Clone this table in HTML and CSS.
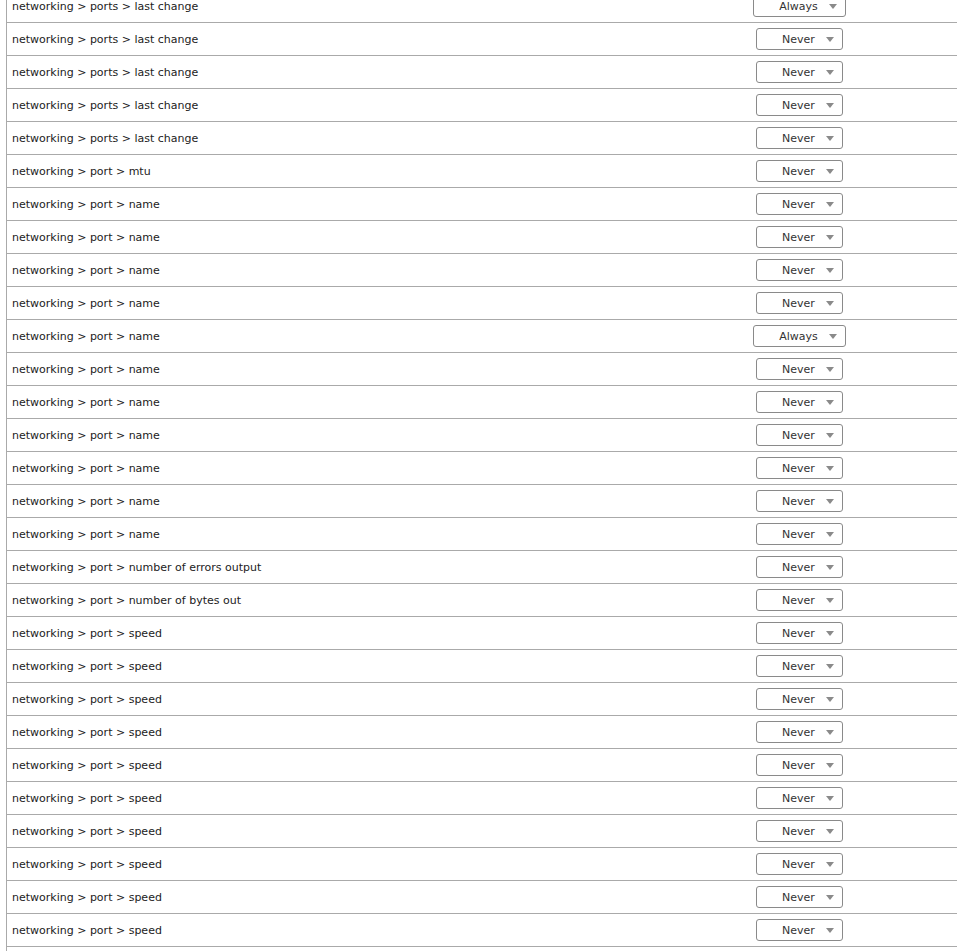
FILE: index.html
```html
<!DOCTYPE html>
<html>
<head>
<meta charset="utf-8">
<link rel="stylesheet" href="styles.css">
</head>
<body>
<div class="list">
  <div class="row"><div class="label">networking &gt; ports &gt; last change</div><div class="cell"><span class="sel"><span class="val">Always</span><span class="arrow"></span></span></div></div>
  <div class="row"><div class="label">networking &gt; ports &gt; last change</div><div class="cell"><span class="sel"><span class="val">Never</span><span class="arrow"></span></span></div></div>
  <div class="row"><div class="label">networking &gt; ports &gt; last change</div><div class="cell"><span class="sel"><span class="val">Never</span><span class="arrow"></span></span></div></div>
  <div class="row"><div class="label">networking &gt; ports &gt; last change</div><div class="cell"><span class="sel"><span class="val">Never</span><span class="arrow"></span></span></div></div>
  <div class="row"><div class="label">networking &gt; ports &gt; last change</div><div class="cell"><span class="sel"><span class="val">Never</span><span class="arrow"></span></span></div></div>
  <div class="row"><div class="label">networking &gt; port &gt; mtu</div><div class="cell"><span class="sel"><span class="val">Never</span><span class="arrow"></span></span></div></div>
  <div class="row"><div class="label">networking &gt; port &gt; name</div><div class="cell"><span class="sel"><span class="val">Never</span><span class="arrow"></span></span></div></div>
  <div class="row"><div class="label">networking &gt; port &gt; name</div><div class="cell"><span class="sel"><span class="val">Never</span><span class="arrow"></span></span></div></div>
  <div class="row"><div class="label">networking &gt; port &gt; name</div><div class="cell"><span class="sel"><span class="val">Never</span><span class="arrow"></span></span></div></div>
  <div class="row"><div class="label">networking &gt; port &gt; name</div><div class="cell"><span class="sel"><span class="val">Never</span><span class="arrow"></span></span></div></div>
  <div class="row"><div class="label">networking &gt; port &gt; name</div><div class="cell"><span class="sel"><span class="val">Always</span><span class="arrow"></span></span></div></div>
  <div class="row"><div class="label">networking &gt; port &gt; name</div><div class="cell"><span class="sel"><span class="val">Never</span><span class="arrow"></span></span></div></div>
  <div class="row"><div class="label">networking &gt; port &gt; name</div><div class="cell"><span class="sel"><span class="val">Never</span><span class="arrow"></span></span></div></div>
  <div class="row"><div class="label">networking &gt; port &gt; name</div><div class="cell"><span class="sel"><span class="val">Never</span><span class="arrow"></span></span></div></div>
  <div class="row"><div class="label">networking &gt; port &gt; name</div><div class="cell"><span class="sel"><span class="val">Never</span><span class="arrow"></span></span></div></div>
  <div class="row"><div class="label">networking &gt; port &gt; name</div><div class="cell"><span class="sel"><span class="val">Never</span><span class="arrow"></span></span></div></div>
  <div class="row"><div class="label">networking &gt; port &gt; name</div><div class="cell"><span class="sel"><span class="val">Never</span><span class="arrow"></span></span></div></div>
  <div class="row"><div class="label">networking &gt; port &gt; number of errors output</div><div class="cell"><span class="sel"><span class="val">Never</span><span class="arrow"></span></span></div></div>
  <div class="row"><div class="label">networking &gt; port &gt; number of bytes out</div><div class="cell"><span class="sel"><span class="val">Never</span><span class="arrow"></span></span></div></div>
  <div class="row"><div class="label">networking &gt; port &gt; speed</div><div class="cell"><span class="sel"><span class="val">Never</span><span class="arrow"></span></span></div></div>
  <div class="row"><div class="label">networking &gt; port &gt; speed</div><div class="cell"><span class="sel"><span class="val">Never</span><span class="arrow"></span></span></div></div>
  <div class="row"><div class="label">networking &gt; port &gt; speed</div><div class="cell"><span class="sel"><span class="val">Never</span><span class="arrow"></span></span></div></div>
  <div class="row"><div class="label">networking &gt; port &gt; speed</div><div class="cell"><span class="sel"><span class="val">Never</span><span class="arrow"></span></span></div></div>
  <div class="row"><div class="label">networking &gt; port &gt; speed</div><div class="cell"><span class="sel"><span class="val">Never</span><span class="arrow"></span></span></div></div>
  <div class="row"><div class="label">networking &gt; port &gt; speed</div><div class="cell"><span class="sel"><span class="val">Never</span><span class="arrow"></span></span></div></div>
  <div class="row"><div class="label">networking &gt; port &gt; speed</div><div class="cell"><span class="sel"><span class="val">Never</span><span class="arrow"></span></span></div></div>
  <div class="row"><div class="label">networking &gt; port &gt; speed</div><div class="cell"><span class="sel"><span class="val">Never</span><span class="arrow"></span></span></div></div>
  <div class="row"><div class="label">networking &gt; port &gt; speed</div><div class="cell"><span class="sel"><span class="val">Never</span><span class="arrow"></span></span></div></div>
  <div class="row"><div class="label">networking &gt; port &gt; speed</div><div class="cell"><span class="sel"><span class="val">Never</span><span class="arrow"></span></span></div></div>
</div>
</body>
</html>
```

FILE: styles.css
```css
html, body {
  margin: 0;
  padding: 0;
  background: #fff;
  overflow: hidden;
}
body {
  font-family: "DejaVu Sans", Tahoma, sans-serif;
  font-size: 11px;
  color: #222;
}
.list {
  margin-left: 6px;
  width: 950px;
  margin-top: -10px;
  min-height: 980px;
  border-left: 1px solid #aaa;
}
.row {
  display: grid;
  grid-template-columns: 1fr 315px;
  height: 32px;
  border-bottom: 1px solid #aaa;
  align-items: center;
}
.label {
  padding-left: 5px;
  white-space: nowrap;
}
.cell {
  display: flex;
  justify-content: center;
}
.sel {
  display: inline-flex;
  align-items: center;
  height: 20px;
  border: 1px solid #8a8a8a;
  border-radius: 3px;
  padding: 0 8px 0 25px;
  color: #333;
  background: #fff;
}
.val {
  margin-right: 11px;
}
.arrow {
  width: 0;
  height: 0;
  border-left: 4px solid transparent;
  border-right: 4px solid transparent;
  border-top: 5px solid #8a8a8a;
}
```
